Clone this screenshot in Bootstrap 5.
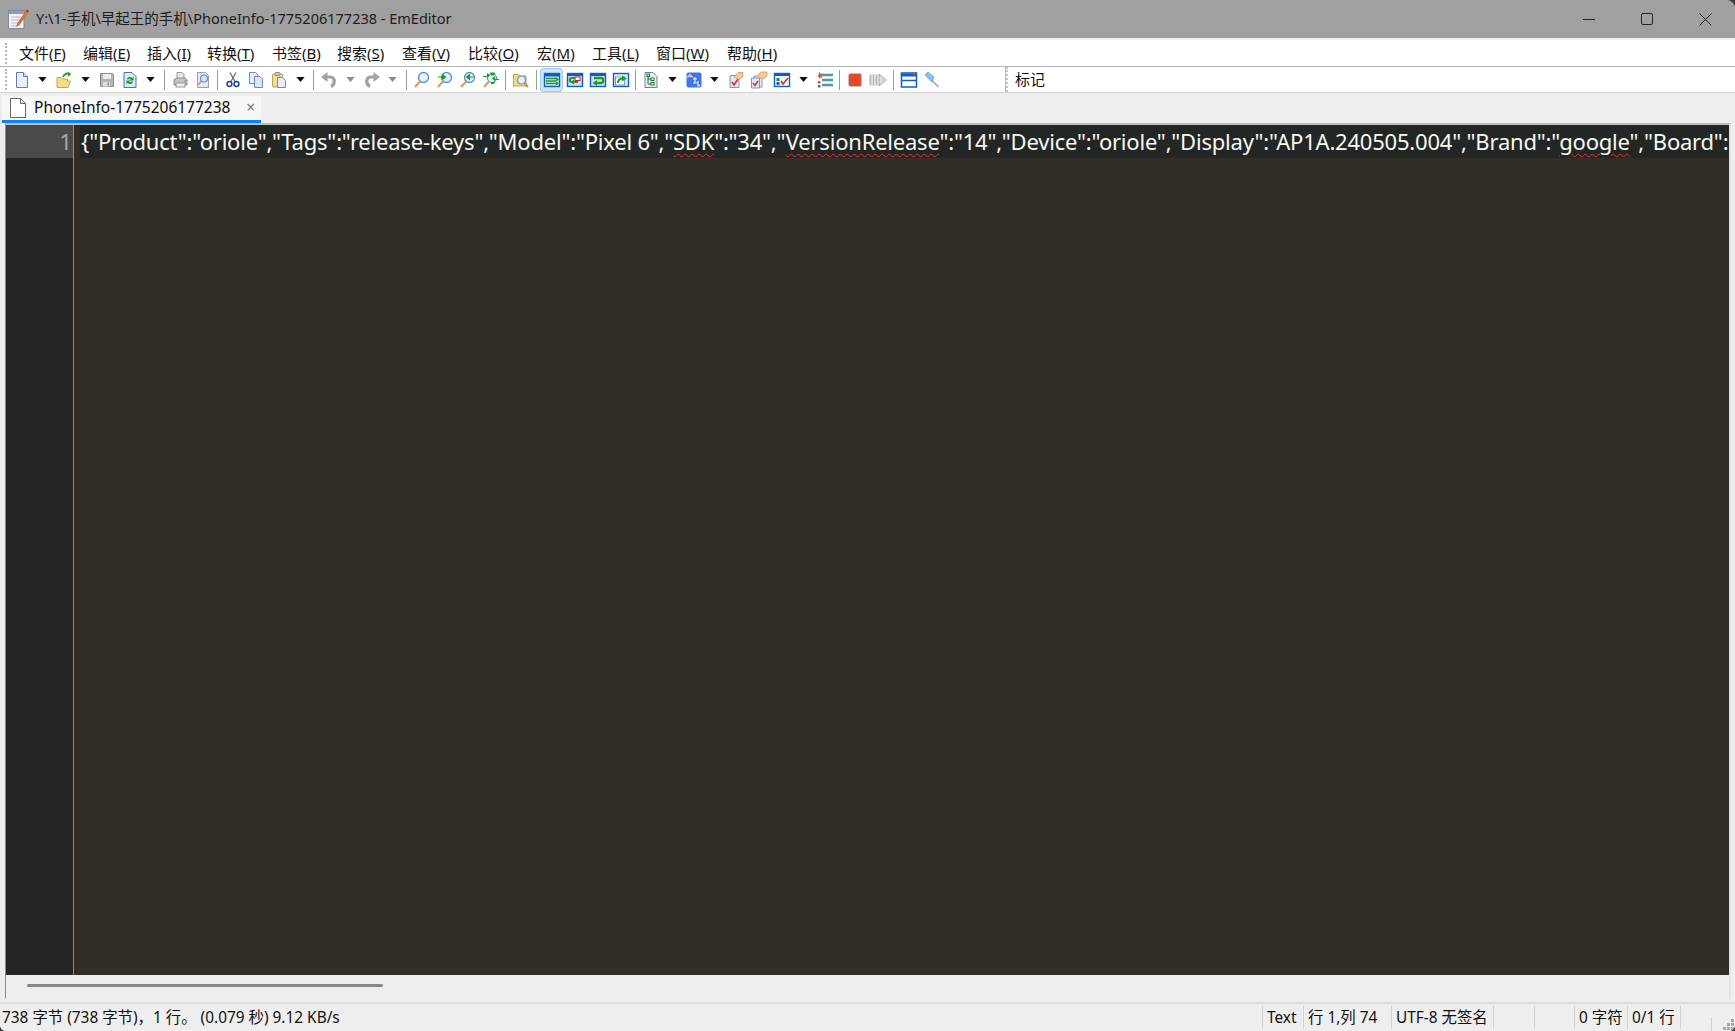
<!DOCTYPE html>
<html lang="zh-CN">

<head>
    <meta charset="UTF-8">
    <meta name="viewport" content="width=device-width, initial-scale=1.0">
    <title>PhoneInfo-1775206177238 - EmEditor</title>
    <link href="https://cdn.jsdelivr.net/npm/bootstrap@5.3.0/dist/css/bootstrap.min.css" rel="stylesheet">
    <script defer src="https://cdn.jsdelivr.net/npm/bootstrap@5.3.0/dist/js/bootstrap.bundle.min.js"></script>
    <style>
        html, body { height: 100%; margin: 0; overflow: hidden; background: #3c3c3c; }
        body { font-family: "Noto Sans", "Noto Sans CJK SC", sans-serif; color: #111; }
        .icon-defs { width: 0; height: 0; overflow: hidden; display: block; }
        .app-win { height: 1031px; background: #eeeeee; border-radius: 0 9px 6px 6px; overflow: hidden; }

        /* title bar */
        .win-title { height: 38px; background: #a0a0a0; flex: none; padding-left: 7px; font-size: 14.5px; color: #1c1c1c; }
        .win-title .title-txt { margin-left: 7px; white-space: nowrap; }
        .win-btn { width: 58.5px; height: 38px; display: flex; align-items: center; justify-content: center; }

        /* menu */
        .menu-row { height: 27px; margin-top: 2px; background: #fff; border-bottom: 1px solid #b4b4b4; flex: none; font-size: 15px; align-items: center; padding-top: 1px; }
        .grip-v { width: 2px; align-self: stretch; margin: 2px 3px 2px 5px; border-left: 2px dotted #b8b8b8; flex: none; }
        .menu-lbl { white-space: nowrap; width: 65px; }
        .menu-lbl.w0 { width: 64px; }
        .menu-lbl.w1 { width: 60px; }
        .menu-lbl.w2 { width: 55px; }
        .menu-lbl.w3 { width: 69px; }
        .menu-lbl.w4 { width: 71px; }
        .menu-lbl.w5 { width: 66px; }
        .menu-lbl.first { margin-left: 9px; }

        /* toolbar */
        .tool-row { height: 26px; background: #fff; border-bottom: 1px solid #d6d6d6; flex: none; }
        .t-ic { width: 23px; height: 24px; display: flex; align-items: center; justify-content: center; flex: none; }
        .t-ic.on { background: #cde6f7; border: 1px solid #9fcdee; border-radius: 3px; }
        .t-arr { width: 19.5px; height: 24px; display: flex; align-items: center; justify-content: center; flex: none; }
        .t-sep { width: 7.5px; height: 20px; flex: none; display: flex; justify-content: center; }
        .t-sep::after { content: ""; width: 1px; background: #9c9c9c; }
        .t-grip { width: 3px; height: 25px; margin-left: 62px; border-left: 1px solid #b8b8b8; border-right: 2px dotted #c4c4c4; flex: none; }
        .t-mark { margin-left: 7px; font-size: 15px; white-space: nowrap; }

        /* tabs */
        .tab-row { height: 30px; flex: none; padding: 3px 0 0 2px; background: #eeeeee; }
        .doc-tab { width: 259px; height: 27px; background: #f7f7f7; border-bottom: 3px solid #0a84f5; font-size: 15.5px; padding-left: 7px; white-space: nowrap; }
        .doc-tab .tab-name { margin-left: 7px; }
        .doc-tab .tab-x { margin-left: auto; margin-right: 6px; color: #777; }

        /* editor */
        .edit-frame { flex: 1 1 auto; min-height: 0; margin-left: 5px; margin-right: 4px; border-top: 2px solid #bdbdbd; border-left: 1px solid #8a8a8a; border-right: 2px solid #e2e2e2; border-bottom: 2px solid #e0e0e0; }
        .edit-pane { height: 850px; flex: none; background: #312d27; overflow: hidden; }
        .gutter-col { width: 68px; flex: none; background: #252525; border-right: 1px solid #8d8d8d; }
        .gutter-cur { height: 33px; background: #4a4a4a; color: #a8a8a8; text-align: right; padding-right: 1px; font-size: 22.5px; line-height: 33px; }
        .code-col { flex: 1 1 auto; min-width: 0; }
        .code-line { height: 33px; margin-left: 6px; padding-left: 1px; background: #222726; color: #f8f8f2; font-size: 22px; letter-spacing: -.21px; line-height: 32px; white-space: nowrap; overflow: hidden; }
        .spell { text-decoration: underline wavy #f02a2e 1px; text-underline-offset: 3px; }
        .hscroll { height: 26px; background: #eeeeee; flex: none; padding: 9px 0 0 21px; }
        .hscroll span { display: block; width: 356px; height: 3px; background: #878787; border-radius: 2px; }

        /* status bar */
        .status-row { height: 29px; flex: none; border-top: 2px solid #dedede; margin-top: 3px; font-size: 15.4px; background: #eeeeee; }
        .st-msg { flex: 1 1 auto; padding-left: 2px; white-space: nowrap; }
        .st-cell { flex: none; border-left: 1px solid #d2d2d2; padding-left: 4px; white-space: nowrap; }
        .w41 { width: 41px; } .w88 { width: 88px; } .w102 { width: 102px; } .w39 { width: 40px; }
        .w53 { width: 53px; } .w31 { width: 31px; } .w24 { width: 24px; padding: 0; }
        .size-grip { align-self: flex-end; margin-left: auto; display: block; }
    </style>
</head>

<body>
    <!-- icon set -->
    <svg class="icon-defs" xmlns="http://www.w3.org/2000/svg">
        <symbol id="i-doc" viewBox="0 0 18 18"><path d="M3.500 1.500h7l4 4v11h-11z" fill="#e9effb" stroke="#5f7cbc"/><path d="M10.500 1.500v4h4" fill="#cfdcf3" stroke="#5f7cbc"/></symbol>
        <symbol id="i-open" viewBox="0 0 18 18"><path d="M2 6.500h4l1.500 1.500h5v2h3l-2.500 6.500H2z" fill="#f7dc8a" stroke="#c9a552"/><path d="M8 6c1-3 4-4 6-3" fill="none" stroke="#3aa02e" stroke-width="2"/><path d="M12.500 .5l4 2.500-3.500 3z" fill="#3aa02e"/></symbol>
        <symbol id="i-save" viewBox="0 0 18 18"><path d="M2.500 2.500h12l1 1v12h-13z" fill="#b5b5b5" stroke="#8d8d8d"/><rect x="5" y="3" width="8" height="5" fill="#ededed"/><rect x="5" y="11" width="7" height="4.500" fill="#e2e2e2"/><rect x="9.500" y="11.500" width="1.500" height="3" fill="#888"/></symbol>
        <symbol id="i-reload" viewBox="0 0 18 18"><path d="M3 1.500h8l4 4v11H3z" fill="#dfe8f8" stroke="#4d6fb5"/><path d="M6 8c1-2.500 4-2.500 5.500-1l1-1.500v4h-4l1.300-1.200c-1-.8-2.300-.5-2.800.7z" fill="#1d9a2b"/><path d="M12 11c-1 2.500-4 2.500-5.500 1l-1 1.500v-4h4L8.200 10.700c1 .8 2.300.5 2.800-.7z" fill="#1d9a2b"/></symbol>
        <symbol id="i-print" viewBox="0 0 18 18"><path d="M6 1.500h5l2 2v5H6z" fill="#e9e9e9" stroke="#9a9a9a"/><path d="M3 9l2-2h9l2 2v5H3z" fill="#c5c5c5" stroke="#8c8c8c"/><rect x="5" y="12" width="9" height="4" fill="#efefef" stroke="#9a9a9a"/><rect x="13" y="9.500" width="2" height="1" fill="#5aa05a"/></symbol>
        <symbol id="i-preview" viewBox="0 0 18 18"><path d="M3.500 1.500h8l3 3v12h-11z" fill="#e3e9f7" stroke="#8ea0c8"/><circle cx="10" cy="7.500" r="3.500" fill="#cfe6fa" stroke="#5f8fc4" stroke-width="1.200"/><path d="M7.500 10l-3.500 4" stroke="#d89a5c" stroke-width="1.800"/></symbol>
        <symbol id="i-cut" viewBox="0 0 18 18"><path d="M6 1.500l5 9M12 1.500l-5 9" stroke="#6a7280" stroke-width="1.300" fill="none"/><circle cx="5.500" cy="13" r="2.400" fill="none" stroke="#1c3f9c" stroke-width="1.500"/><circle cx="12.500" cy="13" r="2.400" fill="none" stroke="#1c3f9c" stroke-width="1.500"/></symbol>
        <symbol id="i-copy" viewBox="0 0 18 18"><path d="M2.500 1.500h6l2.500 2.500v8.500H2.500z" fill="#eaf0fb" stroke="#6f88c0"/><path d="M7.500 5.500h5.500l2.500 2.500v8.500h-8z" fill="#dbe6f8" stroke="#6f88c0"/></symbol>
        <symbol id="i-paste" viewBox="0 0 18 18"><rect x="2.500" y="3" width="10" height="13" rx="1" fill="#efd9a0" stroke="#bfa15e"/><rect x="5" y="1.500" width="5" height="3" rx="1" fill="#c9c9c9" stroke="#909090"/><path d="M7.500 6.500h5l3 3v7h-8z" fill="#e6eefb" stroke="#6f88c0"/></symbol>
        <symbol id="i-undo" viewBox="0 0 18 18"><path d="M5 6h5c5.500 0 5.500 7.500 1 9.500" fill="none" stroke="#a2a2a2" stroke-width="3.200"/><path d="M7.500 1v10L1 6z" fill="#a2a2a2"/></symbol>
        <symbol id="i-redo" viewBox="0 0 18 18"><path d="M13 6H8c-5.500 0-5.500 7.500-1 9.500" fill="none" stroke="#a2a2a2" stroke-width="3.200"/><path d="M10.500 1v10L17 6z" fill="#a2a2a2"/></symbol>
        <symbol id="i-find" viewBox="0 0 18 18"><circle cx="10.500" cy="6.500" r="5" fill="#e6f2fc" stroke="#5b90c8" stroke-width="1.300"/><path d="M7 10.500l-5 5.500" stroke="#e09a55" stroke-width="2.200"/></symbol>
        <symbol id="i-findn" viewBox="0 0 18 18"><circle cx="10.500" cy="6.500" r="5" fill="#e6f2fc" stroke="#5b90c8" stroke-width="1.300"/><path d="M7 10.500l-5 5.500" stroke="#e09a55" stroke-width="2.200"/><path d="M2 5.500h4V2.500l4.500 3.500L6 9.500v-3H2z" fill="#17a024"/></symbol>
        <symbol id="i-findp" viewBox="0 0 18 18"><circle cx="10.500" cy="6.500" r="5" fill="#e6f2fc" stroke="#5b90c8" stroke-width="1.300"/><path d="M7 10.500l-5 5.500" stroke="#e09a55" stroke-width="2.200"/><path d="M15 5.500h-4V2.500L6.500 6 11 9.500v-3h4z" fill="#17a024"/></symbol>
        <symbol id="i-findr" viewBox="0 0 18 18"><circle cx="10" cy="7" r="4.500" fill="#e6f2fc" stroke="#5b90c8" stroke-width="1.200"/><path d="M7 10.500l-5 5.500" stroke="#e09a55" stroke-width="2.200"/><path d="M1 5h4V2l3 2.500L5 7V6H1zM17 8h-4V5l-3 2.500L13 10V9h4z" fill="#17a024"/><path d="M8 1.500h5l-1 3H9zM9 11h4l-1 2h-3z" fill="#17a024"/></symbol>
        <symbol id="i-findf" viewBox="0 0 18 18"><path d="M1.500 3.500h5l1.500 1.500h6v10H1.500z" fill="#f4d98a" stroke="#c6a04f"/><circle cx="9.500" cy="9" r="4" fill="#e6f2fc" stroke="#5b90c8" stroke-width="1.200"/><path d="M12.500 12l3.500 4" stroke="#d48c4c" stroke-width="2"/></symbol>
        <symbol id="i-win-arrows" viewBox="0 0 18 18"><rect x="1.500" y="2.500" width="15" height="13" fill="#cfe0f5" stroke="#0f5fc0" stroke-width="1.400"/><rect x="2" y="3" width="14" height="2.500" fill="#0f5fc0"/><path d="M3 7.500h10M3 10h10M3 12.500h10" stroke="#1f9a2a" stroke-width="1.400"/><path d="M13 6l3 2.500-3 2zM13 10.500l3 2-3 2z" fill="#1f9a2a"/></symbol>
        <symbol id="i-win-mark" viewBox="0 0 18 18"><rect x="1.500" y="2.500" width="15" height="13" fill="#cfe0f5" stroke="#0f5fc0" stroke-width="1.400"/><rect x="2" y="3" width="14" height="2" fill="#0f5fc0"/><path d="M14 7H6c-3 0-3 4 0 4h6" fill="none" stroke="#1f9a2a" stroke-width="2"/><path d="M8 8.500L4.500 11 8 13.500z" fill="#1f9a2a"/><rect x="9" y="6" width="5" height="3.500" fill="#fff" stroke="#c22"/></symbol>
        <symbol id="i-win-wrap" viewBox="0 0 18 18"><rect x="1.500" y="2.500" width="15" height="13" fill="#cfe0f5" stroke="#0f5fc0" stroke-width="1.400"/><rect x="2" y="3" width="14" height="2" fill="#0f5fc0"/><path d="M5 7h7c3 0 3 5 0 5H7" fill="none" stroke="#1f9a2a" stroke-width="2.400"/><path d="M8 9L3.500 12 8 15z" fill="#1f9a2a"/></symbol>
        <symbol id="i-win-pic" viewBox="0 0 18 18"><rect x="1.500" y="2.500" width="15" height="13" fill="#dfe9f6" stroke="#0f5fc0" stroke-width="1.400"/><rect x="3.500" y="6" width="9" height="8" fill="#fff" stroke="#8a9ab5"/><path d="M6 12c0-3 2-4.500 5-4.500" fill="none" stroke="#1f9a2a" stroke-width="2"/><path d="M10 4.500l5 3-5 3z" fill="#1f9a2a"/></symbol>
        <symbol id="i-tree" viewBox="0 0 18 18"><path d="M3 1.500h8l4 4v11H3z" fill="#e8ecf8" stroke="#6f7fb0"/><path d="M6 4v9h3M6 8h3" fill="none" stroke="#1a7a2a"/><rect x="5" y="3" width="2.500" height="2.500" fill="#fff" stroke="#1a7a2a"/><rect x="9" y="7" width="3" height="2.500" fill="#fff" stroke="#1a7a2a"/><rect x="9" y="11.500" width="3" height="2.500" fill="#fff" stroke="#1a7a2a"/></symbol>
        <symbol id="i-lang" viewBox="0 0 18 18"><rect x="1.500" y="1.500" width="15" height="15" rx="2" fill="#3f74e6"/><path d="M2 6.500l3-3 3 3M3 5.500h4" fill="none" stroke="#e8b8f0" stroke-width="1.300"/><path d="M10 6v6M8 8h4M8 12h5M13 10v5l2-1" fill="none" stroke="#e8f0ff" stroke-width="1.200"/></symbol>
        <symbol id="i-hand" viewBox="0 0 18 18"><path d="M3 4.500h9v12H3z" fill="#dfe6f5" stroke="#8a93b5"/><path d="M5 11l2 3 4-6" fill="none" stroke="#e03a2a" stroke-width="1.800"/><path d="M7 6l4-4.500h5v4l-4 3z" fill="#f6c89a" stroke="#d49a63" stroke-width=".8"/></symbol>
        <symbol id="i-hands" viewBox="0 0 18 18"><path d="M4 5h8v11H4z" fill="#e6ebf7" stroke="#8a93b5"/><path d="M1.500 7h8v10h-8z" fill="#dfe6f5" stroke="#8a93b5"/><path d="M3 12l2 2.500 3-4.500" fill="none" stroke="#e03a2a" stroke-width="1.600"/><path d="M7 5l4-4h6v4l-4 3z" fill="#f6c89a" stroke="#d49a63" stroke-width=".8"/></symbol>
        <symbol id="i-win-check" viewBox="0 0 18 18"><rect x="1.500" y="2.500" width="15" height="13" fill="#f2f6fc" stroke="#0f5fc0" stroke-width="1.400"/><rect x="2" y="3" width="14" height="2" fill="#0f5fc0"/><rect x="3.500" y="7" width="3" height="3" fill="#1f8a3a"/><rect x="3.500" y="11" width="3" height="3" fill="#1f5fc0"/><path d="M8 10l2 3 5-6" fill="none" stroke="#e03a2a" stroke-width="1.800"/></symbol>
        <symbol id="i-list" viewBox="0 0 18 18"><path d="M6 4h11M6 9h11M6 14h11" stroke="#4f97a8" stroke-width="2.600"/><path d="M3.500 .5l1 2.500 2-1-1 2.500 1 2.500-2-.8-1 2-.6-2.500L1 5l1.900-1z" fill="#e24a22"/><rect x="2" y="10" width="2.500" height="2.500" fill="#e24a22"/><rect x="2" y="14" width="2.500" height="2.500" fill="#1f9a2a"/></symbol>
        <symbol id="i-stop" viewBox="0 0 18 18"><rect x="2.500" y="2.500" width="13" height="13" rx="2" fill="#e2492c" stroke="#c9c0b8"/></symbol>
        <symbol id="i-play" viewBox="0 0 18 18"><path d="M1.500 3.500v11M4.500 3.500v11M7.500 3.500v11" stroke="#b9b9b9" stroke-width="2"/><path d="M10 3v12l7-6z" fill="#dedede" stroke="#a9a9a9"/></symbol>
        <symbol id="i-win-split" viewBox="0 0 18 18"><rect x="1.500" y="2" width="15" height="14" fill="#fff" stroke="#0f5fc0" stroke-width="1.500"/><rect x="2" y="2.500" width="14" height="3" fill="#0f5fc0"/><path d="M2 9.500h14" stroke="#0f5fc0" stroke-width="1.500"/><rect x="13" y="2.500" width="2" height="1.500" fill="#e8484a"/></symbol>
        <symbol id="i-pin" viewBox="0 0 18 18"><path d="M2 4l3-3 6 5-2 5z" fill="#8fc0ec" stroke="#6c9cd2" stroke-width=".8"/><path d="M9 9.500l6.500 6.500" stroke="#8aa8cc" stroke-width="1.600"/></symbol>
        <symbol id="i-arr" viewBox="0 0 10 6"><path d="M0 0h10L5 6z" fill="#111"/></symbol>
        <symbol id="i-arr-g" viewBox="0 0 10 6"><path d="M0 0h10L5 6z" fill="#8c8c8c"/></symbol>
    </svg>

    <div class="app-win d-flex flex-column">
        <!-- 标题栏 -->
        <div class="win-title d-flex align-items-center">
            <svg width="22" height="22" viewBox="0 0 22 22"><rect x="1.500" y="2.500" width="15.500" height="18" fill="#f2f2f6" stroke="#85859a"/><path d="M2 3h14.500v3H2z" fill="#8e9bc4"/><path d="M4 9h10M4 12h10M4 15h8M4 18h8" stroke="#b8bccb"/><path d="M10 15.500l8.500-12.500 2.500 1.700-8.500 12.500-3.500 1.500z" fill="#d8763a"/><path d="M18.500 3l2.500 1.700 1-1.700-2-1.500z" fill="#c23030"/></svg>
            <span class="title-txt">Y:\1-手机\早起王的手机\PhoneInfo-1775206177238 - EmEditor</span>
            <div class="d-flex ms-auto">
                <div class="win-btn"><svg width="12" height="12" viewBox="0 0 12 12"><path d="M0 6.500h12" stroke="#222"/></svg></div>
                <div class="win-btn"><svg width="12" height="12" viewBox="0 0 12 12"><rect x=".5" y=".5" width="11" height="11" rx="1.500" fill="none" stroke="#222"/></svg></div>
                <div class="win-btn"><svg width="13" height="13" viewBox="0 0 13 13"><path d="M.5.500l12 12M12.500.500l-12 12" stroke="#222"/></svg></div>
            </div>
        </div>

        <!-- 菜单 -->
        <div class="menu-row d-flex">
            <span class="grip-v"></span>
            <span class="menu-lbl w0 first">文件(<u>F</u>)</span>
            <span class="menu-lbl w0">编辑(<u>E</u>)</span>
            <span class="menu-lbl w1">插入(<u>I</u>)</span>
            <span class="menu-lbl">转换(<u>T</u>)</span>
            <span class="menu-lbl">书签(<u>B</u>)</span>
            <span class="menu-lbl">搜索(<u>S</u>)</span>
            <span class="menu-lbl w5">查看(<u>V</u>)</span>
            <span class="menu-lbl w3">比较(<u>O</u>)</span>
            <span class="menu-lbl w2">宏(<u>M</u>)</span>
            <span class="menu-lbl w0">工具(<u>L</u>)</span>
            <span class="menu-lbl w4">窗口(<u>W</u>)</span>
            <span class="menu-lbl">帮助(<u>H</u>)</span>
        </div>

        <!-- 工具栏 -->
        <div class="tool-row d-flex align-items-center">
            <span class="grip-v"></span>
            <span class="t-ic"><svg width="18" height="18"><use href="#i-doc"/></svg></span>
            <span class="t-arr"><svg width="9" height="5"><use href="#i-arr"/></svg></span>
            <span class="t-ic"><svg width="18" height="18"><use href="#i-open"/></svg></span>
            <span class="t-arr"><svg width="9" height="5"><use href="#i-arr"/></svg></span>
            <span class="t-ic"><svg width="18" height="18"><use href="#i-save"/></svg></span>
            <span class="t-ic"><svg width="18" height="18"><use href="#i-reload"/></svg></span>
            <span class="t-arr"><svg width="9" height="5"><use href="#i-arr"/></svg></span>
            <span class="t-sep"></span>
            <span class="t-ic"><svg width="18" height="18"><use href="#i-print"/></svg></span>
            <span class="t-ic"><svg width="18" height="18"><use href="#i-preview"/></svg></span>
            <span class="t-sep"></span>
            <span class="t-ic"><svg width="18" height="18"><use href="#i-cut"/></svg></span>
            <span class="t-ic"><svg width="18" height="18"><use href="#i-copy"/></svg></span>
            <span class="t-ic"><svg width="18" height="18"><use href="#i-paste"/></svg></span>
            <span class="t-arr"><svg width="9" height="5"><use href="#i-arr"/></svg></span>
            <span class="t-sep"></span>
            <span class="t-ic"><svg width="18" height="18"><use href="#i-undo"/></svg></span>
            <span class="t-arr"><svg width="9" height="5"><use href="#i-arr-g"/></svg></span>
            <span class="t-ic"><svg width="18" height="18"><use href="#i-redo"/></svg></span>
            <span class="t-arr"><svg width="9" height="5"><use href="#i-arr-g"/></svg></span>
            <span class="t-sep"></span>
            <span class="t-ic"><svg width="18" height="18"><use href="#i-find"/></svg></span>
            <span class="t-ic"><svg width="18" height="18"><use href="#i-findn"/></svg></span>
            <span class="t-ic"><svg width="18" height="18"><use href="#i-findp"/></svg></span>
            <span class="t-ic"><svg width="18" height="18"><use href="#i-findr"/></svg></span>
            <span class="t-sep"></span>
            <span class="t-ic"><svg width="18" height="18"><use href="#i-findf"/></svg></span>
            <span class="t-sep"></span>
            <span class="t-ic on"><svg width="18" height="18"><use href="#i-win-arrows"/></svg></span>
            <span class="t-ic"><svg width="18" height="18"><use href="#i-win-mark"/></svg></span>
            <span class="t-ic"><svg width="18" height="18"><use href="#i-win-wrap"/></svg></span>
            <span class="t-ic"><svg width="18" height="18"><use href="#i-win-pic"/></svg></span>
            <span class="t-sep"></span>
            <span class="t-ic"><svg width="18" height="18"><use href="#i-tree"/></svg></span>
            <span class="t-arr"><svg width="9" height="5"><use href="#i-arr"/></svg></span>
            <span class="t-ic"><svg width="18" height="18"><use href="#i-lang"/></svg></span>
            <span class="t-arr"><svg width="9" height="5"><use href="#i-arr"/></svg></span>
            <span class="t-ic"><svg width="18" height="18"><use href="#i-hand"/></svg></span>
            <span class="t-ic"><svg width="18" height="18"><use href="#i-hands"/></svg></span>
            <span class="t-ic"><svg width="18" height="18"><use href="#i-win-check"/></svg></span>
            <span class="t-arr"><svg width="9" height="5"><use href="#i-arr"/></svg></span>
            <span class="t-ic"><svg width="18" height="18"><use href="#i-list"/></svg></span>
            <span class="t-sep"></span>
            <span class="t-ic"><svg width="18" height="18"><use href="#i-stop"/></svg></span>
            <span class="t-ic"><svg width="18" height="18"><use href="#i-play"/></svg></span>
            <span class="t-sep"></span>
            <span class="t-ic"><svg width="18" height="18"><use href="#i-win-split"/></svg></span>
            <span class="t-ic"><svg width="18" height="18"><use href="#i-pin"/></svg></span>
            <span class="t-grip"></span>
            <span class="t-mark">标记</span>
        </div>

        <!-- 标签页 -->
        <div class="tab-row d-flex">
            <div class="doc-tab d-flex align-items-center">
                <svg width="18" height="22" viewBox="0 0 18 22"><path d="M1.500 1.500h10l5 5v14h-15z" fill="#fff" stroke="#666"/><path d="M11.500 1.500v5h5" fill="none" stroke="#666"/></svg>
                <span class="tab-name">PhoneInfo-1775206177238</span>
                <span class="tab-x">×</span>
            </div>
        </div>

        <!-- 编辑区 -->
        <div class="edit-frame d-flex flex-column">
            <div class="edit-pane d-flex">
                <div class="gutter-col"><div class="gutter-cur">1</div></div>
                <div class="code-col">
                    <div class="code-line">{"Product":"oriole","Tags":"release-keys","Model":"Pixel 6","<span class="spell">SDK</span>":"34","<span class="spell">VersionRelease</span>":"14","Device":"oriole","Display":"AP1A.240505.004","Brand":"<span class="spell">google</span>","Board":</div>
                </div>
            </div>
            <div class="hscroll"><span></span></div>
        </div>

        <!-- 状态栏 -->
        <div class="status-row d-flex align-items-center">
            <div class="st-msg">738 字节 (738 字节)，1 行。 (0.079 秒) 9.12 KB/s</div>
            <div class="st-cell w41">Text</div>
            <div class="st-cell w88">行 1,列 74</div>
            <div class="st-cell w102">UTF-8 无签名</div>
            <div class="st-cell w41">&nbsp;</div>
            <div class="st-cell w39">&nbsp;</div>
            <div class="st-cell w53">0 字符</div>
            <div class="st-cell w53">0/1 行</div>
            <div class="st-cell w31">&nbsp;</div>
            <div class="st-cell w24 d-flex justify-content-end align-self-end">
                <svg class="size-grip" width="14" height="14" viewBox="0 0 14 14"><path d="M10 2h3v3h-3zM6 6h3v3H6zM10 6h3v3h-3zM2 10h3v3H2zM6 10h3v3H6zM10 10h3v3h-3z" fill="#a8a8a8"/></svg>
            </div>
        </div>
    </div>
</body>

</html>
